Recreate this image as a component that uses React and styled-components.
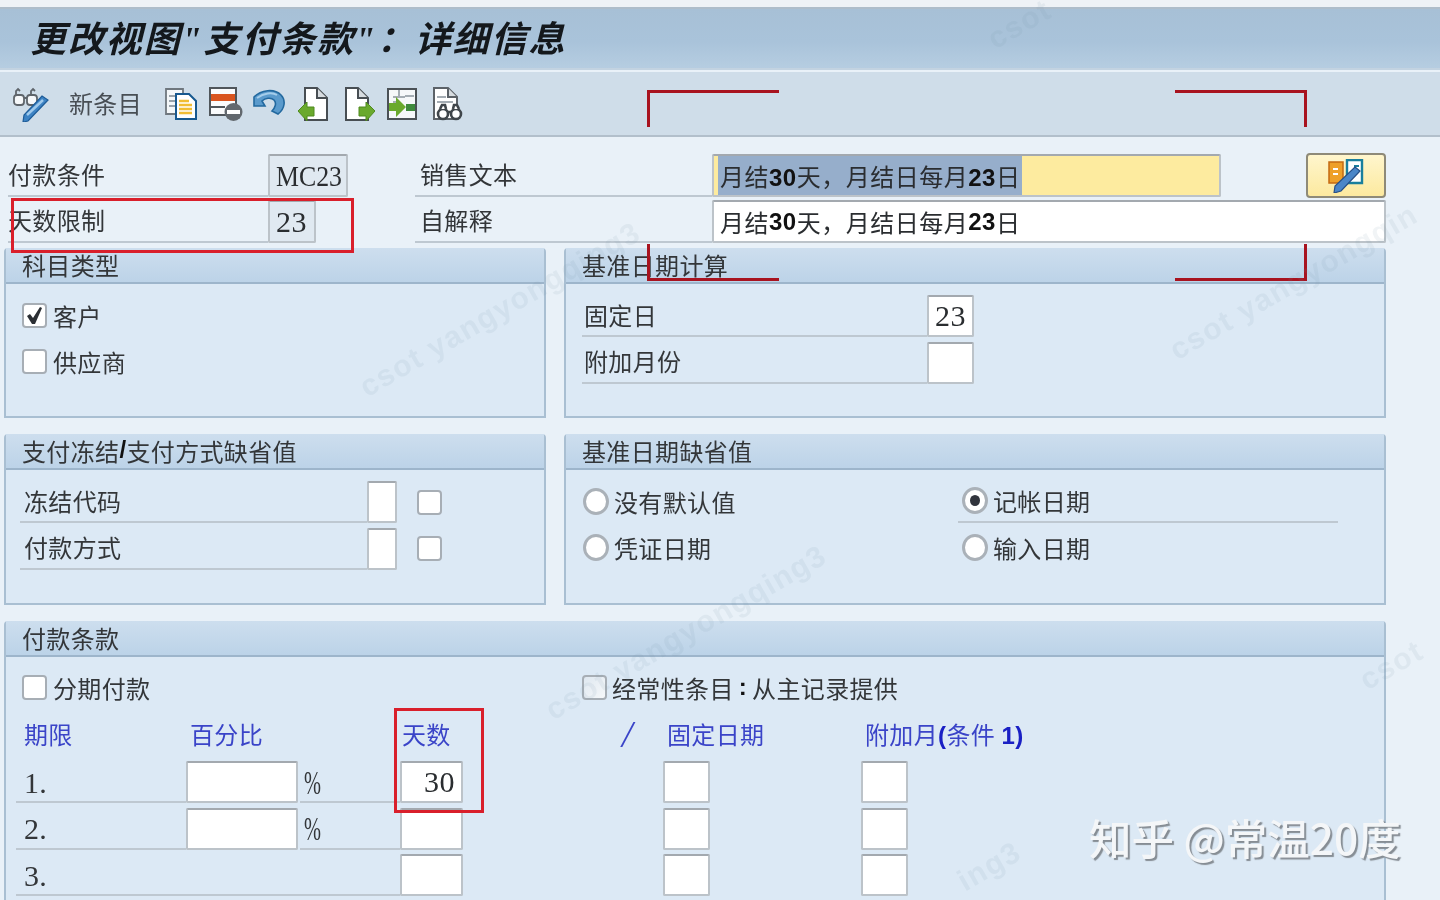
import React from "react";
import styled, { createGlobalStyle } from "styled-components";

const Global = createGlobalStyle`
  html, body { margin: 0; padding: 0; background: #e9f1f8; }
  body { font-family: "Liberation Serif", "Noto Sans CJK SC", serif; }
`;

const Page = styled.div`
  position: relative;
  width: 1440px;
  height: 900px;
  overflow: hidden;
  background: #e9f1f8;
  color: #333639;
  font-size: 24px;
  letter-spacing: 0.35px;
  filter: blur(0.45px);
`;
const TopStrip = styled.div`
  height: 7px;
  background: #eef2f6;
  border-bottom: 2px solid #aebdca;
`;
const TitleBar = styled.header`
  height: 61px;
  box-sizing: border-box;
  padding: 0 0 6px 30px;
  display: flex;
  align-items: center;
  background: linear-gradient(180deg, #a7c0d6 0%, #a9c3da 55%, #b6cde1 100%);
  border-bottom: 2px solid #c3d3e1;
`;
const Title = styled.h1`
  margin: 0;
  font: italic 700 36px "Liberation Serif", "Noto Sans CJK SC", serif;
  letter-spacing: 1.9px;
  color: #14181c;
  white-space: nowrap;
`;
const Toolbar = styled.div`
  height: 65px;
  margin-top: 2px;
  box-sizing: border-box;
  padding-left: 13px;
  display: flex;
  align-items: center;
  background: #cfdde9;
  border-bottom: 2px solid #b2bfcb;
`;
const ToolIcon = styled.svg`
  flex: none;
  margin-left: ${(p) => p.$ml || 0}px;
`;
const ToolText = styled.span`
  margin-left: 20px;
  padding-bottom: 3px;
  color: #484e54;
  white-space: nowrap;
`;

const HeaderForm = styled.section`
  padding: 17px 54px 0 8px;
  display: grid;
  grid-template-columns: 260px 147px 297px 1fr;
  grid-auto-rows: 43px;
  row-gap: 3px;
`;
const Label = styled.div`
  display: flex;
  align-items: center;
  box-sizing: border-box;
  padding-left: ${(p) => p.$pad || 0}px;
  padding-bottom: 2px;
  border-bottom: 2px solid #bec8d1;
  white-space: nowrap;
  ${(p) => p.$span && `grid-column: span ${p.$span};`}
`;
const FieldCell = styled.div`
  display: flex;
  align-items: stretch;
  justify-content: space-between;
`;
const Field = styled.div`
  box-sizing: border-box;
  flex: none;
  width: ${(p) => (p.$w ? `${p.$w}px` : "auto")};
  ${(p) => !p.$w && "flex: 1;"}
  display: flex;
  align-items: center;
  justify-content: ${(p) => (p.$right ? "flex-end" : "flex-start")};
  padding: 0 6px;
  background: ${(p) => p.$bg || "#ffffff"};
  border: 2px solid #bcc3c9;
  border-top-color: #a3a9af;
  border-radius: 2px;
  font-size: ${(p) => p.$fs || 24}px;
  letter-spacing: 0.5px;
  color: #2a2d30;
  white-space: nowrap;
  overflow: hidden;
`;
const NarrowCode = styled.span`
  display: inline-block;
  letter-spacing: 0;
  transform: scaleX(0.86);
  transform-origin: left center;
`;
const Num = styled.b`
  font-family: "Liberation Sans", sans-serif;
  color: #111;
`;
const BlueNum = styled.b`
  font-family: "Liberation Sans", sans-serif;
  color: #1a20c4;
`;
const Selected = styled.span`
  background: #96aecb;
  padding: 2px 2px 2px 2px;
  margin-left: -2px;
`;
const HelpButton = styled.button`
  flex: none;
  width: 80px;
  height: 45px;
  margin-top: -1px;
  padding: 0;
  display: flex;
  align-items: center;
  justify-content: center;
  background: linear-gradient(180deg, #fff6cd 0%, #fce99f 100%);
  border: 2px solid #8e8a78;
  border-radius: 4px;
`;

const Groups = styled.main`
  margin-top: 5px;
  padding-left: 4px;
  display: grid;
  grid-template-columns: 542px 822px;
  grid-template-rows: 170px 171px auto;
  column-gap: 18px;
  row-gap: 16px;
`;
const Group = styled.section`
  box-sizing: border-box;
  background: #dce9f5;
  border: 2px solid #a9bfd2;
  border-radius: 4px 4px 0 0;
  ${(p) => p.$wide && "grid-column: 1 / -1; height: 400px;"}
  ${(p) => p.$short && "height: 171px; margin-bottom: -1px;"}
`;
const GroupHead = styled.h2`
  margin: -2px 0 0;
  height: 36px;
  box-sizing: border-box;
  padding: 0 0 2px 16px;
  display: flex;
  align-items: center;
  font-size: 24px;
  font-weight: 400;
  color: #333639;
  background: linear-gradient(180deg, #cddeee 0%, #bcd3e8 100%);
  border-bottom: 2px solid #9db5cb;
`;
const GroupBody = styled.div`
  padding: 11px 0 0 ${(p) => p.$pad || 16}px;
  display: grid;
  grid-template-columns: ${(p) => p.$cols || "1fr"};
  grid-auto-rows: 42px;
  row-gap: 4.5px;
  align-items: stretch;
`;
const Option = styled.label`
  display: flex;
  align-items: center;
  gap: ${(p) => p.$gap || 6}px;
  white-space: nowrap;
  padding-left: ${(p) => p.$pad || 0}px;
  padding-bottom: 2px;
  box-sizing: border-box;
  ${(p) => p.$line && "border-bottom: 2px solid #bec8d1;"}
`;
const Check = styled.span`
  flex: none;
  box-sizing: border-box;
  width: 25px;
  height: 25px;
  margin-left: ${(p) => p.$ml || 0}px;
  align-self: center;
  display: flex;
  align-items: center;
  justify-content: center;
  background: ${(p) => (p.$off ? "linear-gradient(135deg,#dfe8f0,#f6f8fa)" : "#fff")};
  border: 2px solid #a7aeb5;
  border-radius: 4px;
`;
const Radio = styled.span`
  flex: none;
  box-sizing: border-box;
  width: 26px;
  height: 27px;
  display: flex;
  align-items: center;
  justify-content: center;
  background: #fff;
  border: 3px solid #aab1b8;
  border-radius: 50%;
  &::after {
    content: "";
    display: ${(p) => (p.$on ? "block" : "none")};
    width: 10px;
    height: 11px;
    border-radius: 50%;
    background: #30343c;
  }
`;

const TermsBody = styled.div`
  padding: 8px 0 0 10px;
`;
const CheckLine = styled.div`
  height: 46px;
  display: grid;
  grid-template-columns: 560px 1fr;
  padding-left: 6px;
`;
const ColumnHeads = styled.div`
  height: 46px;
  display: grid;
  grid-template-columns: 170px 112px 102px 63px 200px 47px 151px 47px;
  align-items: center;
  margin-bottom: 4px;
`;
const ColumnHead = styled.span`
  padding-left: ${(p) => p.$pad ?? 4}px;
  padding-bottom: 2px;
  color: #3a44c8;
  white-space: nowrap;
`;
const Slash = styled.span`
  padding-left: 159px;
  font: italic 38px "Liberation Serif", serif;
  color: #3a44c8;
`;
const TermRows = styled.div`
  display: grid;
  grid-template-columns: 170px 112px 102px 63px 200px 47px 151px 47px;
  grid-auto-rows: 42px;
  row-gap: 4.5px;
`;
const RowNum = styled(Label)`
  font-size: 30px;
  padding-left: 8px;
  padding-bottom: 0;
  padding-top: 3px;
`;
const PercentCell = styled(Label)`
  padding-left: 4px;
  padding-bottom: 0;
  padding-top: 3px;
  margin-left: 2px;
`;
const PercentSign = styled.span`
  display: inline-block;
  font-size: 34px;
  letter-spacing: 0;
  transform: scaleX(0.6);
  transform-origin: left center;
`;

const RedBox = styled.div`
  position: absolute;
  box-sizing: border-box;
  left: ${(p) => p.$x}px;
  top: ${(p) => p.$y}px;
  width: ${(p) => p.$w}px;
  height: ${(p) => p.$h}px;
  border: 3px solid #d91f2b;
`;
const Bracket = styled.div`
  position: absolute;
  box-sizing: border-box;
  left: ${(p) => p.$x}px;
  top: ${(p) => p.$y}px;
  width: 132px;
  height: 37px;
  border: 0 solid #a8131f;
  border-${(p) => p.$v}-width: 3px;
  border-${(p) => p.$h}-width: 3px;
`;
const Watermark = styled.div`
  position: absolute;
  left: ${(p) => p.$x}px;
  top: ${(p) => p.$y}px;
  transform: rotate(-30deg);
  transform-origin: left center;
  font: 700 30px "Liberation Sans", sans-serif;
  letter-spacing: 1.5px;
  color: rgba(120, 145, 170, 0.1);
  white-space: nowrap;
  pointer-events: none;
`;
const Zhihu = styled.div`
  position: absolute;
  left: 1089px;
  top: 806px;
  font: 500 42.500px "Noto Sans CJK SC", sans-serif;
  letter-spacing: 0;
  color: #f4f6f8;
  text-shadow: 2px 2px 1px #868d94;
  white-space: nowrap;
`;

const GlassesPencil = () => (
  <ToolIcon width="36" height="36" viewBox="0 0 36 36">
    <g fill="#f6f8fa" stroke="#5f656b" strokeWidth="1.8">
      <rect x="1" y="9" width="10" height="10" rx="3" />
      <rect x="14" y="9" width="10" height="10" rx="3" />
      <path d="M11 12h3M3 9V5l2-2 2 2M18 9V5l2-2 2 2" fill="none" />
    </g>
    <path d="M29 10l6 4-20 21-5 1 1-7z" fill="#3d83c4" stroke="#1e5c98" strokeWidth="1.2" />
    <path d="M14 29l16-15" stroke="#9fc9ec" strokeWidth="2.4" />
  </ToolIcon>
);
const CopyDoc = () => (
  <ToolIcon $ml="23" width="32" height="32" viewBox="0 0 32 32">
    <path d="M1 1h17v25H1z" fill="#f4f7f9" stroke="#6f777e" strokeWidth="1.8" />
    <path d="M4 8h9M4 13h9M4 18h9" stroke="#9aa3ab" strokeWidth="2" />
    <path d="M11 6h13l7 7v18H11z" fill="#fff" stroke="#17588f" strokeWidth="2" />
    <path d="M14 13h10M14 17h13M14 21h13M14 25h13" stroke="#f1bd35" strokeWidth="2.6" />
  </ToolIcon>
);
const DeleteRow = () => (
  <ToolIcon $ml="12" width="34" height="34" viewBox="0 0 34 34">
    <path d="M1 1h26v27H1z" fill="#fafbfc" stroke="#50565b" strokeWidth="2" />
    <path d="M2 7h24v7H2z" fill="#d9541e" />
    <path d="M2 20h14" stroke="#50565b" strokeWidth="2" />
    <circle cx="24.500" cy="25" r="9" fill="#62686e" />
    <path d="M18 25h13" stroke="#fff" strokeWidth="4" />
  </ToolIcon>
);
const Undo = () => (
  <ToolIcon $ml="10" width="32" height="30" viewBox="0 0 32 30">
    <path d="M1 8c7-7 20-9 27-2 5 5 4 14-3 19l-6-3c3-3 5-8 2-11-3-3-9-2-12 1l3 5H1z" fill="#5a9acc" stroke="#23699f" strokeWidth="1.6" />
    <path d="M4 9c7-5 15-6 20-3" fill="none" stroke="#a5cdea" strokeWidth="2" />
  </ToolIcon>
);
const DocPrev = () => (
  <ToolIcon $ml="13" width="30" height="34" viewBox="0 0 30 34">
    <path d="M7 1h12l10 10v22H7z" fill="#fff" stroke="#484e53" strokeWidth="2" />
    <path d="M19 1v10h10" fill="#d7dce0" stroke="#484e53" strokeWidth="2" />
    <path d="M0 24l9-9v5h7v9H9v5z" fill="#6aa92d" stroke="#4f8a1e" />
  </ToolIcon>
);
const DocNext = () => (
  <ToolIcon $ml="17" width="30" height="34" viewBox="0 0 30 34">
    <path d="M1 1h12l10 10v22H1z" fill="#fff" stroke="#484e53" strokeWidth="2" />
    <path d="M13 1v10h10" fill="#d7dce0" stroke="#484e53" strokeWidth="2" />
    <path d="M30 24l-9-9v5h-7v9h7v5z" fill="#6aa92d" stroke="#4f8a1e" />
  </ToolIcon>
);
const TableArrow = () => (
  <ToolIcon $ml="12" width="30" height="32" viewBox="0 0 30 32">
    <path d="M1 1h28v30H1z" fill="#f6f8fa" stroke="#4b5156" strokeWidth="2" />
    <path d="M12 2v8M6 9h12M18 8h9M6 14h5" stroke="#a5adb4" strokeWidth="2" />
    <path d="M2 15h7v-6l10 10-10 10v-6H2z" fill="#6aa92d" />
    <path d="M19 16h9v7h-9z" fill="#3f8a3c" />
  </ToolIcon>
);
const DocGlasses = () => (
  <ToolIcon $ml="16" width="30" height="34" viewBox="0 0 30 34">
    <path d="M1 1h14l9 9v22H1z" fill="#fff" stroke="#5c6268" strokeWidth="2" />
    <path d="M15 1v9h9" fill="#d7dce0" stroke="#5c6268" strokeWidth="2" />
    <path d="M4 10h9M4 15h16" stroke="#a5adb4" strokeWidth="2" />
    <g fill="#fff" stroke="#3f454a" strokeWidth="2.6">
      <circle cx="10" cy="27" r="5" />
      <circle cx="23" cy="27" r="5" />
      <path d="M15 25h3M7 22l2-4h3l1 4M20 22l1-4h3l2 4" />
    </g>
  </ToolIcon>
);
const EditDocs = () => (
  <svg width="36" height="34" viewBox="0 0 36 34">
    <path d="M1 3h14v21H1z" fill="#eea028" stroke="#c46a12" strokeWidth="1.5" />
    <path d="M5 10h5M5 15h5" stroke="#fff" strokeWidth="2" />
    <path d="M19 1h15v23H19z" fill="#fff" stroke="#197f9d" strokeWidth="2.4" />
    <path d="M26 7h5M26 12h5" stroke="#197f9d" strokeWidth="2" />
    <path d="M27 8l5 4L13 32l-7 2 1-7z" fill="#4a86c8" stroke="#264f86" strokeWidth="1.2" />
  </svg>
);
const Tick = () => (
  <svg width="17" height="19" viewBox="0 0 17 19">
    <path d="M1 10l3-2 3 4 7-11 2 1-7 16H6z" fill="#2a2e33" />
  </svg>
);

const AutoText = () => (
  <>
    月结<Num>30</Num>天，月结日每月<Num>23</Num>日
  </>
);

const termRow = (n, hasPercent, days) => (
  <React.Fragment key={n}>
    {hasPercent ? (
      <>
        <RowNum>{n}.</RowNum>
        <Field />
        <PercentCell><PercentSign>%</PercentSign></PercentCell>
      </>
    ) : (
      <RowNum $span={3}>{n}.</RowNum>
    )}
    <Field $right $fs={30}>{days}</Field>
    <span />
    <Field />
    <span />
    <Field />
  </React.Fragment>
);

export default function App() {
  return (
    <Page>
      <Global />
      <TopStrip />
      <TitleBar>
        <Title>更改视图"支付条款"：详细信息</Title>
      </TitleBar>
      <Toolbar>
        <GlassesPencil />
        <ToolText>新条目</ToolText>
        <CopyDoc />
        <DeleteRow />
        <Undo />
        <DocPrev />
        <DocNext />
        <TableArrow />
        <DocGlasses />
      </Toolbar>

      <HeaderForm>
        <Label>付款条件</Label>
        <FieldCell>
          <Field $w={80} $bg="#e0e9f1" $fs={30}><NarrowCode>MC23</NarrowCode></Field>
        </FieldCell>
        <Label $pad={5}>销售文本</Label>
        <FieldCell>
          <Field $w={509} $bg="#fdeb9f"><Selected><AutoText /></Selected></Field>
          <HelpButton aria-label="编辑"><EditDocs /></HelpButton>
        </FieldCell>

        <Label>天数限制</Label>
        <FieldCell>
          <Field $w={48} $bg="#e0e9f1" $fs={30}>23</Field>
        </FieldCell>
        <Label $pad={5}>自解释</Label>
        <FieldCell>
          <Field><AutoText /></Field>
        </FieldCell>
      </HeaderForm>

      <Groups>
        <Group>
          <GroupHead>科目类型</GroupHead>
          <GroupBody>
            <Option><Check><Tick /></Check>客户</Option>
            <Option><Check />供应商</Option>
          </GroupBody>
        </Group>
        <Group>
          <GroupHead>基准日期计算</GroupHead>
          <GroupBody $cols="345px 47px">
            <Label $pad={2}>固定日</Label>
            <Field $fs={30}>23</Field>
            <Label $pad={2}>附加月份</Label>
            <Field />
          </GroupBody>
        </Group>

        <Group $short>
          <GroupHead>支付冻结<Num>/</Num>支付方式缺省值</GroupHead>
          <GroupBody $pad={14} $cols="347px 30px 20px 25px">
            <Label $pad={4}>冻结代码</Label>
            <Field />
            <span />
            <Check />
            <Label $pad={4}>付款方式</Label>
            <Field />
            <span />
            <Check />
          </GroupBody>
        </Group>
        <Group $short>
          <GroupHead>基准日期缺省值</GroupHead>
          <GroupBody $cols="376px 380px">
            <Option $gap={5} $pad={1}><Radio />没有默认值</Option>
            <Option $gap={5} $pad={4} $line><Radio $on />记帐日期</Option>
            <Option $gap={5} $pad={1}><Radio />凭证日期</Option>
            <Option $gap={5} $pad={4}><Radio />输入日期</Option>
          </GroupBody>
        </Group>

        <Group $wide>
          <GroupHead>付款条款</GroupHead>
          <TermsBody>
            <CheckLine>
              <Option><Check />分期付款</Option>
              <Option $gap={5}><Check $off />经常性条目<Num>:</Num> 从主记录提供</Option>
            </CheckLine>
            <ColumnHeads>
              <ColumnHead $pad={8}>期限</ColumnHead>
              <ColumnHead>百分比</ColumnHead>
              <span />
              <ColumnHead $pad={2}>天数</ColumnHead>
              <Slash>/</Slash>
              <ColumnHead>固定日期</ColumnHead>
              <span />
              <ColumnHead>附加月<BlueNum>(</BlueNum>条件 <BlueNum>1)</BlueNum></ColumnHead>
            </ColumnHeads>
            <TermRows>
              {termRow(1, true, "30")}
              {termRow(2, true, "")}
              {termRow(3, false, "")}
            </TermRows>
          </TermsBody>
        </Group>
      </Groups>

      <Bracket $x={647} $y={90} $v="top" $h="left" />
      <Bracket $x={1175} $y={90} $v="top" $h="right" />
      <Bracket $x={647} $y={244} $v="bottom" $h="left" />
      <Bracket $x={1175} $y={244} $v="bottom" $h="right" />
      <RedBox $x={11} $y={198} $w={343} $h={55} />
      <RedBox $x={394} $y={708} $w={90} $h={105} />

      <Watermark $x={362} $y={372}>csot yangyongqing3</Watermark>
      <Watermark $x={1172} $y={335}>csot yangyongqin</Watermark>
      <Watermark $x={548} $y={695}>csot yangyongqing3</Watermark>
      <Watermark $x={990} $y={24}>csot</Watermark>
      <Watermark $x={1362} $y={665}>csot</Watermark>
      <Watermark $x={960} $y={866}>ing3</Watermark>
      <Zhihu>知乎 @常温20度</Zhihu>
    </Page>
  );
}
